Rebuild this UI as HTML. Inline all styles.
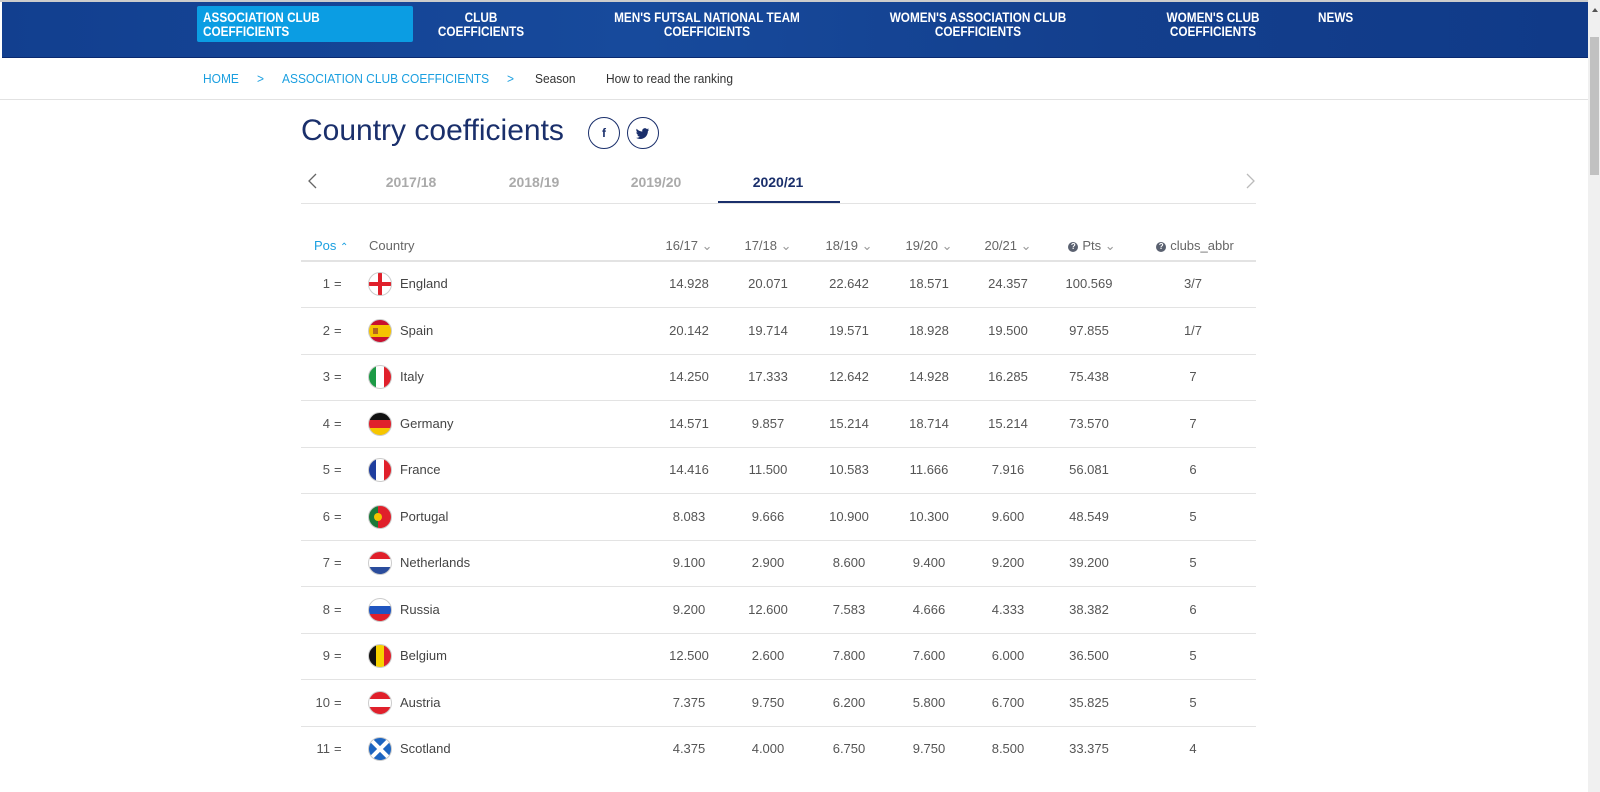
<!DOCTYPE html>
<html><head><meta charset="utf-8">
<style>
*{margin:0;padding:0;box-sizing:border-box}
body{width:1600px;height:792px;overflow:hidden;background:#fff;font-family:"Liberation Sans",sans-serif;position:relative;color:#444}
.a{position:absolute;white-space:nowrap}
#top{position:absolute;left:0;top:0;width:1588px;height:2px;background:#ccc}
#hdr{position:absolute;left:2px;top:2px;width:1586px;height:56px;background:linear-gradient(90deg,#123f8f,#174a9c 40%,#133f8d 70%,#103a88);border-bottom:1px solid #0a2a70}
.nav{position:absolute;color:#fff;font-weight:bold;font-size:14px;line-height:14px;text-align:center;transform:scaleX(0.84);transform-origin:center top}
.nl{transform-origin:left top;text-align:left}
#act{position:absolute;left:197px;top:6px;width:216px;height:36px;background:#0b9de3;border-radius:2px}
#sb{position:absolute;left:1588px;top:0;width:12px;height:792px;background:#f0f0f0}
#thumb{position:absolute;left:1590px;top:37px;width:9px;height:138px;background:#c1c1c1}
.bc{font-size:13px;top:71px;transform:scaleX(0.92);transform-origin:left top}
.tab{top:174px;font-size:14px;font-weight:bold;color:#aaa;width:120px;text-align:center}
.th{top:238px;font-size:13px;color:#666;width:80px;text-align:center}
.c{font-size:13px;color:#555;width:90px;text-align:center}
.line{position:absolute;left:301px;width:955px;height:1px;background:#e3e3e3}
svg.f{position:absolute;width:24px;height:24px}
.q{display:inline-block;width:10px;height:10px;border-radius:50%;background:#5a6170;color:#fff;font-size:8px;line-height:10px;text-align:center;font-weight:bold;vertical-align:1px;margin-right:4px}
</style></head><body>
<div id="top"></div>
<div id="hdr"></div>
<div id="act"></div>
<div class="nav nl" style="left:203px;top:10px">ASSOCIATION CLUB<br>COEFFICIENTS</div>
<div class="nav" style="left:421px;top:10px;width:120px">CLUB<br>COEFFICIENTS</div>
<div class="nav" style="left:587px;top:10px;width:240px">MEN'S FUTSAL NATIONAL TEAM<br>COEFFICIENTS</div>
<div class="nav" style="left:858px;top:10px;width:240px">WOMEN'S ASSOCIATION CLUB<br>COEFFICIENTS</div>
<div class="nav" style="left:1143px;top:10px;width:140px">WOMEN'S CLUB<br>COEFFICIENTS</div>
<div class="nav nl" style="left:1318px;top:10px">NEWS</div>
<div id="sb"></div><div id="thumb"></div>
<div class="a" style="left:1592px;top:8px;width:0;height:0;border-left:3px solid transparent;border-right:3px solid transparent;border-bottom:4px solid #555"></div>

<div class="a bc" style="left:203px;color:#1a9fe0">HOME</div>
<div class="a bc" style="left:257px;color:#1a9fe0">&gt;</div>
<div class="a bc" style="left:282px;color:#1a9fe0">ASSOCIATION CLUB COEFFICIENTS</div>
<div class="a bc" style="left:507px;color:#1a9fe0">&gt;</div>
<div class="a bc" style="left:535px;color:#333">Season</div>
<div class="a bc" style="left:606px;color:#333">How to read the ranking</div>
<div class="a" style="left:0;top:99px;width:1588px;height:1px;background:#e2e2e2"></div>

<div class="a" style="left:301px;top:114px;font-size:30px;color:#1a2f6b">Country coefficients</div>
<div class="a" style="left:588px;top:117px;width:32px;height:32px;border:1px solid #1a2f6b;border-radius:50%;text-align:center;line-height:30px;font-size:12px;font-weight:bold;color:#1a2f6b">f</div>
<div class="a" style="left:627px;top:117px;width:32px;height:32px;border:1px solid #1a2f6b;border-radius:50%"><svg width="30" height="30" viewBox="0 0 30 30"><path d="M21 11.5c-.5.2-1 .4-1.6.4.6-.3 1-.9 1.2-1.5-.5.3-1.1.5-1.7.7a2.7 2.7 0 0 0-4.6 2.5c-2.300-.1-4.300-1.200-5.600-2.800-.8 1.300-.3 2.900.8 3.600-.4 0-.9-.1-1.200-.3 0 1.300.9 2.400 2.200 2.700-.4.1-.8.1-1.200 0 .3 1.100 1.300 1.900 2.500 1.900A5.500 5.500 0 0 1 8 19.800c1.200.8 2.600 1.200 4.200 1.200 5 0 7.800-4.200 7.700-7.900.5-.4 1-.9 1.100-1.600z" fill="#1a2f6b"/></svg></div>

<svg class="a" style="left:307px;top:173px" width="12" height="16"><path d="M9 1L2 8l7 7" stroke="#666" fill="none" stroke-width="1.3"/></svg>
<svg class="a" style="left:1244px;top:173px" width="12" height="16"><path d="M3 1l7 7-7 7" stroke="#bbb" fill="none" stroke-width="1.3"/></svg>
<div class="a tab" style="left:351px">2017/18</div>
<div class="a tab" style="left:474px">2018/19</div>
<div class="a tab" style="left:596px">2019/20</div>
<div class="a tab" style="left:718px;color:#1a2f6b">2020/21</div>
<div class="line" style="top:203px"></div>
<div class="a" style="left:718px;top:201px;width:122px;height:2px;background:#1a2f6b"></div>

<div class="a" style="left:314px;top:238px;font-size:13px;color:#1a9fe0">Pos <span style="font-size:10px">&#8963;</span></div>
<div class="a" style="left:369px;top:238px;font-size:13px;color:#666">Country</div>
<div class="a th" style="left:649px">16/17 <span style="color:#999">&#8964;</span></div>
<div class="a th" style="left:728px">17/18 <span style="color:#999">&#8964;</span></div>
<div class="a th" style="left:809px">18/19 <span style="color:#999">&#8964;</span></div>
<div class="a th" style="left:889px">19/20 <span style="color:#999">&#8964;</span></div>
<div class="a th" style="left:968px">20/21 <span style="color:#999">&#8964;</span></div>
<div class="a th" style="left:1052px"><span class="q">?</span>Pts <span style="color:#999">&#8964;</span></div>
<div class="a th" style="left:1145px;width:100px"><span class="q">?</span>clubs_abbr</div>
<div class="line" style="top:260px;height:2px"></div>

<div id="rows"></div>
<script>
var d=[
[1,"England","14.928","20.071","22.642","18.571","24.357","100.569","3/7",'<rect width="24" height="24" fill="#fff"/><rect x="10" width="4" height="24" fill="#e0202b"/><rect y="10" width="24" height="4" fill="#e0202b"/>'],
[2,"Spain","20.142","19.714","19.571","18.928","19.500","97.855","1/7",'<rect width="24" height="24" fill="#c8102e"/><rect y="6" width="24" height="12" fill="#f5c400"/><rect x="5" y="9" width="5" height="6" fill="#b5651d"/>'],
[3,"Italy","14.250","17.333","12.642","14.928","16.285","75.438","7",'<rect width="8" height="24" fill="#1c9a45"/><rect x="8" width="8" height="24" fill="#fff"/><rect x="16" width="8" height="24" fill="#e0202b"/>'],
[4,"Germany","14.571","9.857","15.214","18.714","15.214","73.570","7",'<rect width="24" height="8" fill="#111"/><rect y="8" width="24" height="8" fill="#e0202b"/><rect y="16" width="24" height="8" fill="#f6c600"/>'],
[5,"France","14.416","11.500","10.583","11.666","7.916","56.081","6",'<rect width="8" height="24" fill="#1f3e9e"/><rect x="8" width="8" height="24" fill="#fff"/><rect x="16" width="8" height="24" fill="#e0202b"/>'],
[6,"Portugal","8.083","9.666","10.900","10.300","9.600","48.549","5",'<rect width="10" height="24" fill="#1a7a3a"/><rect x="10" width="14" height="24" fill="#e0202b"/><circle cx="10" cy="12" r="4" fill="#f3c400"/>'],
[7,"Netherlands","9.100","2.900","8.600","9.400","9.200","39.200","5",'<rect width="24" height="8" fill="#e0202b"/><rect y="8" width="24" height="8" fill="#fff"/><rect y="16" width="24" height="8" fill="#2a4c9c"/>'],
[8,"Russia","9.200","12.600","7.583","4.666","4.333","38.382","6",'<rect width="24" height="8" fill="#fff"/><rect y="8" width="24" height="8" fill="#1f55c0"/><rect y="16" width="24" height="8" fill="#e0202b"/>'],
[9,"Belgium","12.500","2.600","7.800","7.600","6.000","36.500","5",'<rect width="8" height="24" fill="#111"/><rect x="8" width="8" height="24" fill="#f6d200"/><rect x="16" width="8" height="24" fill="#e0202b"/>'],
[10,"Austria","7.375","9.750","6.200","5.800","6.700","35.825","5",'<rect width="24" height="24" fill="#e0202b"/><rect y="8" width="24" height="8" fill="#fff"/>'],
[11,"Scotland","4.375","4.000","6.750","9.750","8.500","33.375","4",'<rect width="24" height="24" fill="#1d65c1"/><path d="M0 0L24 24M24 0L0 24" stroke="#fff" stroke-width="4"/>']
];
var cx=[689,768,849,929,1008,1089,1193],h="";
d.forEach(function(r,i){
 var y=284+46.5*i;
 h+='<div class="a" style="left:300px;top:'+(y-8)+'px;width:30px;text-align:right;font-size:13px;color:#555">'+r[0]+'</div>';
 h+='<div class="a" style="left:334px;top:'+(y-8)+'px;font-size:13px;color:#555">=</div>';
 h+='<svg class="f" style="left:368px;top:'+(y-12)+'px" viewBox="0 0 24 24"><defs><clipPath id="c'+i+'"><circle cx="12" cy="12" r="11.5"/></clipPath></defs><g clip-path="url(#c'+i+')">'+r[9]+'</g><circle cx="12" cy="12" r="11.5" fill="none" stroke="#ccc" stroke-width="1"/></svg>';
 h+='<div class="a" style="left:400px;top:'+(y-8)+'px;font-size:13px;color:#444">'+r[1]+'</div>';
 for(var k=0;k<7;k++)h+='<div class="a c" style="left:'+(cx[k]-45)+'px;top:'+(y-8)+'px">'+r[k+2]+'</div>';
 if(i<10)h+='<div class="line" style="top:'+Math.round(y+23)+'px"></div>';
});
document.getElementById("rows").innerHTML=h;
</script>
</body></html>
